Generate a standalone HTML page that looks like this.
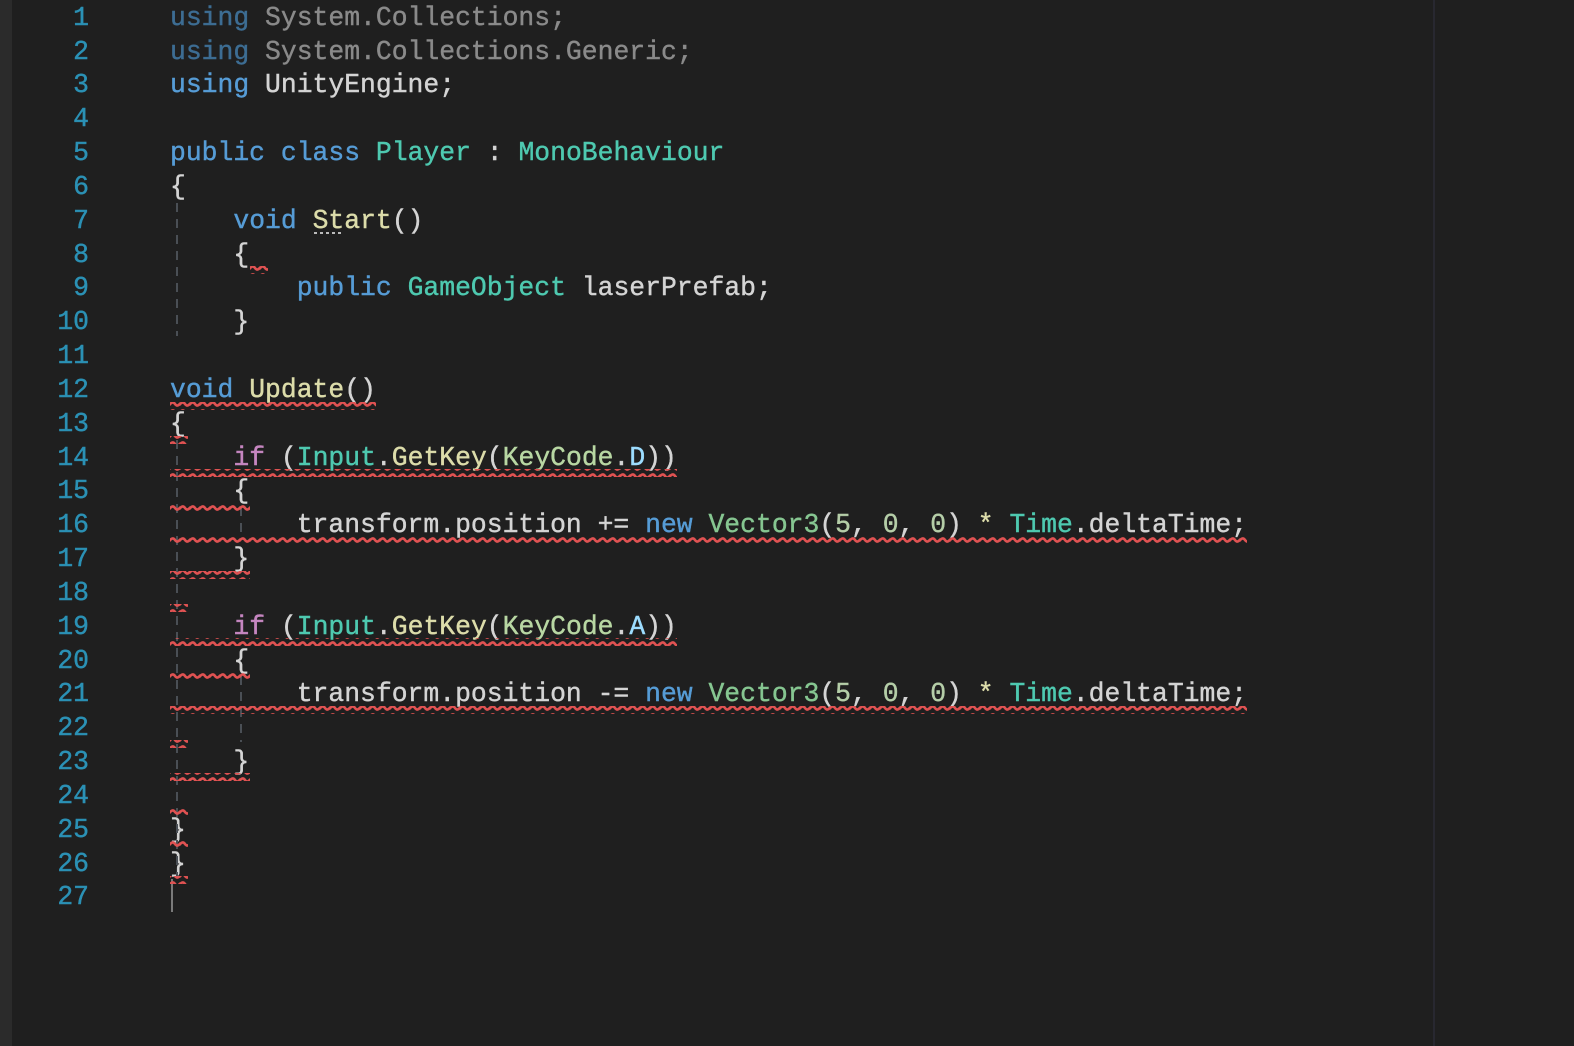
<!DOCTYPE html>
<html><head><meta charset="utf-8"><style>
html,body{margin:0;padding:0;background:#1f1f1f;width:1574px;height:1046px;overflow:hidden;position:relative}
.strip{position:absolute;left:0;top:0;width:12px;height:1046px;background:#2b2b2b}
.div{position:absolute;left:1433px;top:0;width:2px;height:1046px;background:#282830}
.ln,.cd{position:absolute;font-family:"Liberation Mono","DejaVu Sans Mono",monospace;font-size:26.4px;line-height:34px;white-space:pre;-webkit-text-stroke:0.4px currentColor;margin-top:2px}
.ln{left:0;width:89px;text-align:right;color:#2b91b5}
.cd{left:170px;color:#d4d4d4}
.k{color:#569cd6}.t{color:#4ec9b0}.f{color:#dcdcaa}.v{color:#9cdcfe}.n{color:#b5cea8}.c{color:#c586c0}.s{color:#86c691}.e{color:#b8d7a3}
.dk{color:#3d6d93}.dg{color:#8a8a8a}
svg{position:absolute;left:0;top:0}
</style></head><body>
<div class="strip"></div><div class="div"></div>
<div class="ln" style="top:-1px">1</div><div class="cd" style="top:-1px"><span class="dk">using</span> <span class="dg">System.Collections;</span></div>
<div class="ln" style="top:33px">2</div><div class="cd" style="top:33px"><span class="dk">using</span> <span class="dg">System.Collections.Generic;</span></div>
<div class="ln" style="top:66px">3</div><div class="cd" style="top:66px"><span class="k">using</span> UnityEngine;</div>
<div class="ln" style="top:100px">4</div>
<div class="ln" style="top:134px">5</div><div class="cd" style="top:134px"><span class="k">public</span> <span class="k">class</span> <span class="t">Player</span> : <span class="t">MonoBehaviour</span></div>
<div class="ln" style="top:168px">6</div><div class="cd" style="top:168px">{</div>
<div class="ln" style="top:202px">7</div><div class="cd" style="top:202px">    <span class="k">void</span> <span class="f">Start</span>()</div>
<div class="ln" style="top:236px">8</div><div class="cd" style="top:236px">    {</div>
<div class="ln" style="top:269px">9</div><div class="cd" style="top:269px">        <span class="k">public</span> <span class="t">GameObject</span> laserPrefab;</div>
<div class="ln" style="top:303px">10</div><div class="cd" style="top:303px">    }</div>
<div class="ln" style="top:337px">11</div>
<div class="ln" style="top:371px">12</div><div class="cd" style="top:371px"><span class="k">void</span> <span class="f">Update</span>()</div>
<div class="ln" style="top:405px">13</div><div class="cd" style="top:405px">{</div>
<div class="ln" style="top:439px">14</div><div class="cd" style="top:439px">    <span class="c">if</span> (<span class="t">Input</span>.<span class="f">GetKey</span>(<span class="e">KeyCode</span>.<span class="v">D</span>))</div>
<div class="ln" style="top:472px">15</div><div class="cd" style="top:472px">    {</div>
<div class="ln" style="top:506px">16</div><div class="cd" style="top:506px">        transform.position += <span class="k">new</span> <span class="s">Vector3</span>(<span class="n">5</span>, <span class="n">0</span>, <span class="n">0</span>) <span class="f">*</span> <span class="t">Time</span>.deltaTime;</div>
<div class="ln" style="top:540px">17</div><div class="cd" style="top:540px">    }</div>
<div class="ln" style="top:574px">18</div>
<div class="ln" style="top:608px">19</div><div class="cd" style="top:608px">    <span class="c">if</span> (<span class="t">Input</span>.<span class="f">GetKey</span>(<span class="e">KeyCode</span>.<span class="v">A</span>))</div>
<div class="ln" style="top:642px">20</div><div class="cd" style="top:642px">    {</div>
<div class="ln" style="top:675px">21</div><div class="cd" style="top:675px">        transform.position -= <span class="k">new</span> <span class="s">Vector3</span>(<span class="n">5</span>, <span class="n">0</span>, <span class="n">0</span>) <span class="f">*</span> <span class="t">Time</span>.deltaTime;</div>
<div class="ln" style="top:709px">22</div>
<div class="ln" style="top:743px">23</div><div class="cd" style="top:743px">    }</div>
<div class="ln" style="top:777px">24</div>
<div class="ln" style="top:811px">25</div><div class="cd" style="top:811px">}</div>
<div class="ln" style="top:845px">26</div><div class="cd" style="top:845px">}</div>
<div class="ln" style="top:878px">27</div>
<svg width="1574" height="1046">
<defs><pattern id="w" x="0" y="0" width="10" height="8" patternUnits="userSpaceOnUse"><path d="M-0.5 5 Q2.5 0.5 5 4 T10.5 3" fill="none" stroke="#e05252" stroke-width="2.6"/></pattern></defs>
<g stroke="#4a4f55" stroke-width="2" stroke-dasharray="9 7">
<line x1="177" y1="203" x2="177" y2="336"/>
<line x1="177" y1="440" x2="177" y2="876"/>
<line x1="241" y1="507" x2="241" y2="540"/>
<line x1="241" y1="676" x2="241" y2="742"/>
</g>
<line x1="172" y1="879" x2="172" y2="912" stroke="#7a7a7a" stroke-width="2"/>
<line x1="314" y1="233" x2="342" y2="233" stroke="#bbb" stroke-width="2" stroke-dasharray="3 3"/>
<g fill="url(#w)">
<rect x="250" y="266" width="18" height="8"/>
<rect x="170" y="402" width="206" height="8"/>
<rect x="170" y="436" width="18" height="8"/>
<rect x="170" y="469" width="507" height="8"/>
<rect x="170" y="503" width="80" height="8"/>
<rect x="170" y="537" width="1077" height="8"/>
<rect x="170" y="571" width="80" height="8"/>
<rect x="170" y="604" width="18" height="8"/>
<rect x="170" y="638" width="507" height="8"/>
<rect x="170" y="672" width="80" height="8"/>
<rect x="170" y="706" width="1077" height="8"/>
<rect x="170" y="740" width="18" height="8"/>
<rect x="170" y="773" width="80" height="8"/>
<rect x="170" y="808" width="18" height="8"/>
<rect x="170" y="841" width="18" height="8"/>
<rect x="170" y="876" width="18" height="8"/>
</g>
</svg>
</body></html>
